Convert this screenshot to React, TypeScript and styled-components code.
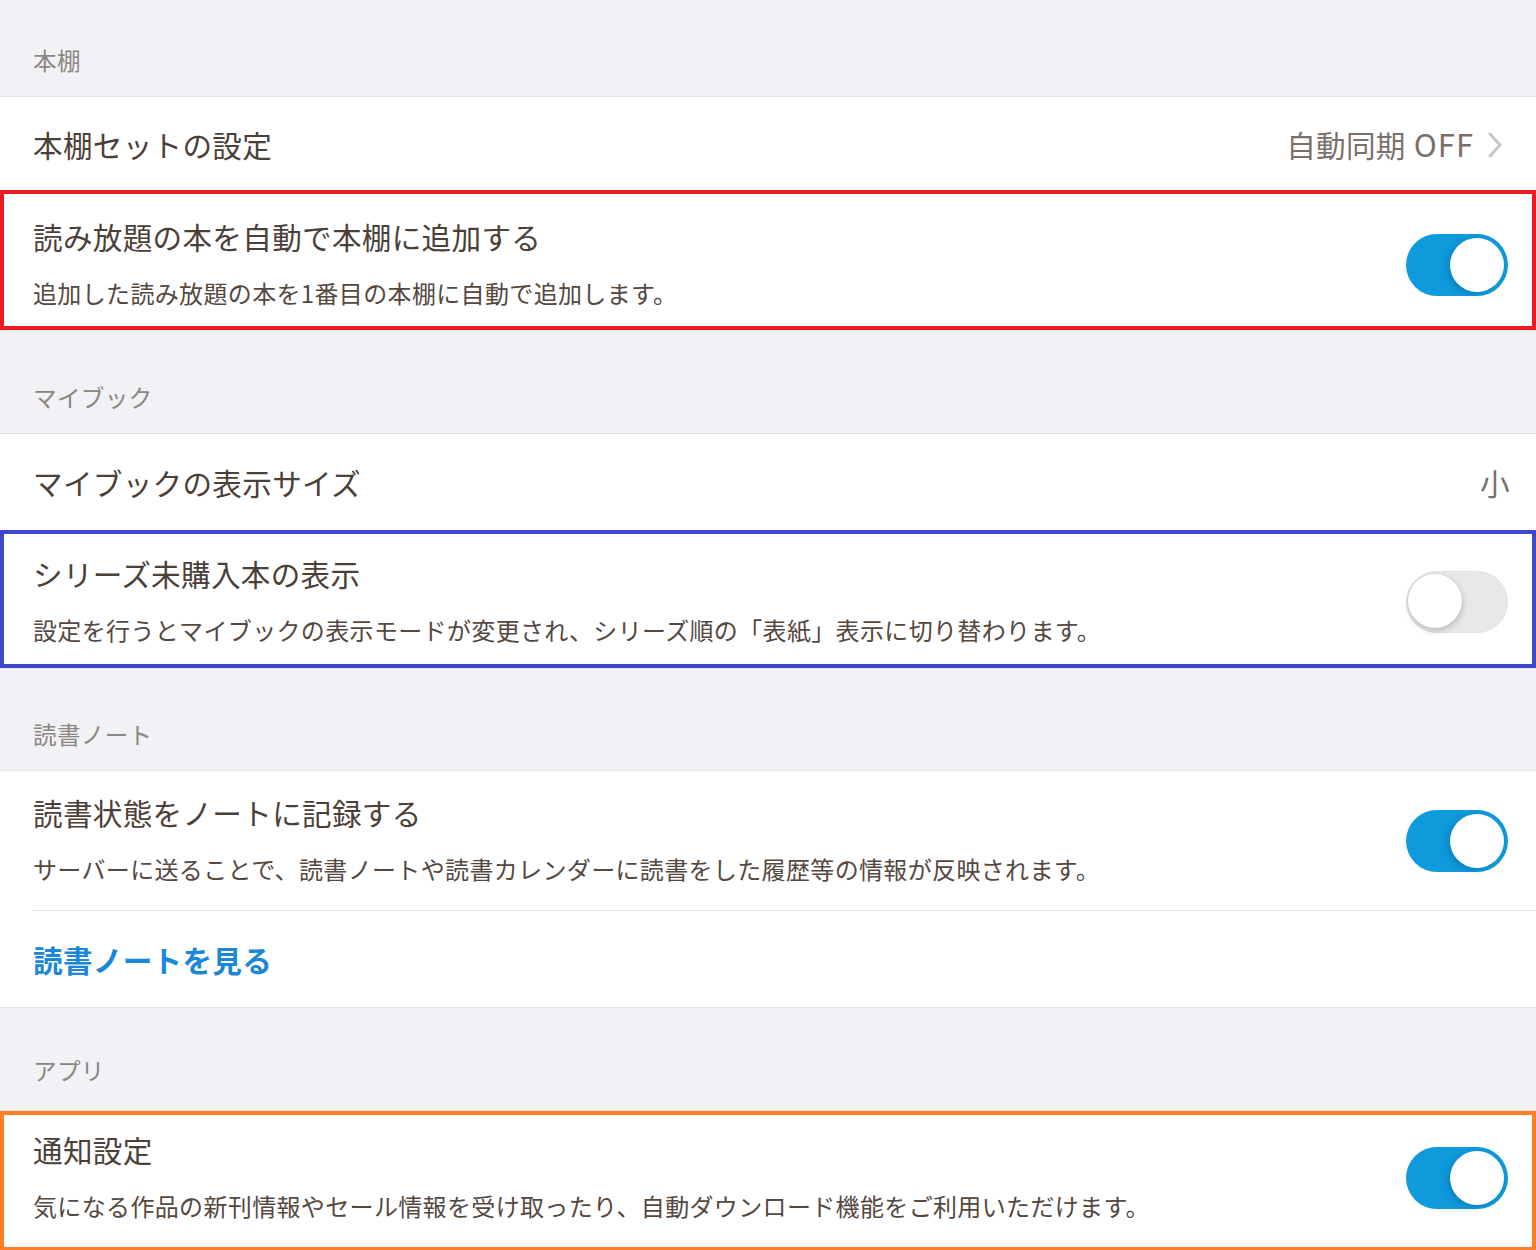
import React from "react";
import styled, { createGlobalStyle } from "styled-components";

const GlobalStyle = createGlobalStyle`
  html, body {
    margin: 0;
    padding: 0;
    background: #f1f1f6;
  }
  body {
    font-family: "Noto Sans CJK JP", "Noto Sans", sans-serif;
    -webkit-font-smoothing: antialiased;
  }
`;

const Page = styled.div`
  width: 1536px;
  background: #f1f1f6;
`;

const SectionHeader = styled.div<{ $h: number; $pb?: number }>`
  height: ${(p) => p.$h}px;
  box-sizing: border-box;
  display: flex;
  align-items: flex-end;
  padding: 0 0 ${(p) => p.$pb ?? 24}px 33px;
  font-size: 23.6px;
  line-height: 24px;
  letter-spacing: 0.3px;
  color: #8d8680;
`;

const Group = styled.div`
  background: #fff;
  border-top: 1px solid #e2e2e6;
  border-bottom: 1px solid #e2e2e6;
`;

const Row = styled.div<{ $h: number; $mark?: string; $shift?: number }>`
  position: relative;
  height: ${(p) => p.$h}px;
  box-sizing: border-box;
  display: flex;
  align-items: center;
  justify-content: space-between;
  padding: 0 28px 0 33px;
  padding-top: ${(p) => Math.max(0, 2 * (p.$shift ?? 1))}px;
  padding-bottom: ${(p) => Math.max(0, -2 * (p.$shift ?? 1))}px;
  box-shadow: ${(p) => (p.$mark ? `inset 0 0 0 4px ${p.$mark}` : "none")};
`;

const TextBlock = styled.div`
  display: flex;
  flex-direction: column;
  gap: 20px;
`;

const Title = styled.div`
  font-size: 29.6px;
  line-height: 40px;
  letter-spacing: 0.3px;
  color: #4b4038;
  white-space: nowrap;
`;

const Sub = styled.div`
  font-size: 24px;
  line-height: 32px;
  letter-spacing: 0.35px;
  color: #54483f;
  white-space: nowrap;
`;

const Value = styled.div<{ $right?: number }>`
  display: flex;
  align-items: center;
  gap: 14px;
  font-size: 29.6px;
  line-height: 40px;
  letter-spacing: 0.3px;
  color: #7a706a;
  margin-right: ${(p) => p.$right ?? 0}px;
`;

const Latin = styled.span`
  margin-left: 8px;
  font-size: 31px;
  letter-spacing: 1px;
`;

const Divider = styled.div`
  height: 1px;
  margin-left: 33px;
  background: #e4e4e7;
`;

const Link = styled.div`
  font-size: 29.6px;
  line-height: 40px;
  letter-spacing: 0.3px;
  font-weight: 700;
  color: #1b87d8;
`;

const Track = styled.div<{ $on: boolean; $dy: number }>`
  position: relative;
  flex: none;
  width: 102px;
  height: 62px;
  margin-top: ${(p) => p.$dy}px;
  border-radius: 31px;
  box-sizing: border-box;
  background: ${(p) => (p.$on ? "#0f9adb" : "#e8e8ea")};
  border: ${(p) => (p.$on ? "none" : "1px solid #e2e2e4")};
`;

const Knob = styled.div<{ $on: boolean }>`
  position: absolute;
  top: ${(p) => (p.$on ? 4 : 2)}px;
  ${(p) => (p.$on ? "right: 4px;" : "left: 1px;")}
  width: 54px;
  height: 54px;
  border-radius: 50%;
  background: #fff;
  box-shadow: ${(p) =>
    p.$on
      ? "-3px 2px 6px rgba(0, 60, 110, 0.25)"
      : "1px 3px 6px rgba(0, 0, 0, 0.18), 0 0 0 1px rgba(0,0,0,0.04)"};
`;

const Toggle = ({ on, dy = 4 }: { on: boolean; dy?: number }) => (
  <Track $on={on} $dy={dy}>
    <Knob $on={on} />
  </Track>
);

const Chevron = () => (
  <svg width="14" height="26" viewBox="0 0 14 26">
    <polyline
      points="2,2 12,13 2,24"
      fill="none"
      stroke="#c6c6cb"
      strokeWidth="3"
      strokeLinecap="round"
      strokeLinejoin="round"
    />
  </svg>
);

const App = () => {
  return (
    <Page>
      <GlobalStyle />
      <SectionHeader $h={96}>本棚</SectionHeader>
      <Group>
        <Row $h={93}>
          <Title>本棚セットの設定</Title>
          <Value $right={6}>
            <span>
              自動同期<Latin>OFF</Latin>
            </span>
            <Chevron />
          </Value>
        </Row>
        <Row $h={140} $mark="#ed1c24" $shift={2.5}>
          <TextBlock>
            <Title>読み放題の本を自動で本棚に追加する</Title>
            <Sub>追加した読み放題の本を1番目の本棚に自動で追加します。</Sub>
          </TextBlock>
          <Toggle on />
        </Row>
      </Group>

      <SectionHeader $h={102}>マイブック</SectionHeader>
      <Group>
        <Row $h={96}>
          <Title>マイブックの表示サイズ</Title>
          <Value $right={-2}>小</Value>
        </Row>
        <Row $h={138} $mark="#3f48cc">
          <TextBlock>
            <Title>シリーズ未購入本の表示</Title>
            <Sub>設定を行うとマイブックの表示モードが変更され、シリーズ順の「表紙」表示に切り替わります。</Sub>
          </TextBlock>
          <Toggle on={false} />
        </Row>
      </Group>

      <SectionHeader $h={101}>読書ノート</SectionHeader>
      <Group>
        <Row $h={139} $shift={-2}>
          <TextBlock>
            <Title>読書状態をノートに記録する</Title>
            <Sub>サーバーに送ることで、読書ノートや読書カレンダーに読書をした履歴等の情報が反映されます。</Sub>
          </TextBlock>
          <Toggle on />
        </Row>
        <Divider />
        <Row $h={96}>
          <Link>読書ノートを見る</Link>
        </Row>
      </Group>

      <SectionHeader $h={102} $pb={28}>アプリ</SectionHeader>
      <Group>
        <Row $h={140} $mark="#ff7f27" $shift={-5}>
          <TextBlock>
            <Title>通知設定</Title>
            <Sub>気になる作品の新刊情報やセール情報を受け取ったり、自動ダウンロード機能をご利用いただけます。</Sub>
          </TextBlock>
          <Toggle on />
        </Row>
      </Group>
    </Page>
  );
};

export default App;
